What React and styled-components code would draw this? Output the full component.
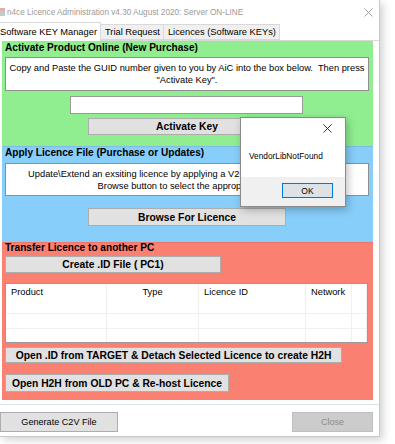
import styled, { createGlobalStyle } from 'styled-components';

const GlobalStyle = createGlobalStyle`
  html, body {
    margin: 0;
    padding: 0;
    background: #ffffff;
  }
  body {
    font-family: "Liberation Sans", Arial, sans-serif;
    font-size: 9.3px;
    color: #000;
  }
`;

const Screen = styled.div`
  position: relative;
  width: 395px;
  height: 444px;
  overflow: hidden;
  background: #ffffff;
`;

const Window = styled.div`
  width: 380px;
  height: 437px;
  background: #ffffff;
  border-right: 1px solid #c9c9c9;
  border-bottom: 1px solid #c9c9c9;
  box-shadow: 3px 3px 8px rgba(0, 0, 0, 0.18);
  display: flex;
  flex-direction: column;
  box-sizing: border-box;
`;

const TitleBar = styled.div`
  height: 22px;
  display: flex;
  align-items: center;
  padding-top: 2px;
  box-sizing: border-box;
`;

const AppIcon = styled.span`
  width: 5px;
  height: 8px;
  background: linear-gradient(#c77 0 40%, #9aa 40% 100%);
  opacity: 0.6;
`;

const TitleText = styled.span`
  margin-left: 2px;
  flex: 1;
  font-size: 8.2px;
  color: #9a9a9a;
  white-space: nowrap;
`;

const CloseX = styled.svg`
  width: 9px;
  height: 9px;
  margin-right: 6px;
`;

const TabStrip = styled.div`
  height: 19px;
  display: flex;
  align-items: flex-end;
  border-bottom: 1px solid #d9d9d9;
  box-sizing: border-box;
`;

const Tab = styled.div`
  height: ${(p) => (p.$active ? 19 : 16)}px;
  padding: 0 3px 0 ${(p) => (p.$first ? 0 : 4)}px;
  margin-left: ${(p) => (p.$first ? 0 : -1)}px;
  margin-bottom: ${(p) => (p.$active ? -1 : 0)}px;
  display: flex;
  align-items: center;
  background: ${(p) => (p.$active ? '#ffffff' : '#f0f0f0')};
  border: 1px solid #d9d9d9;
  border-bottom: ${(p) => (p.$active ? 'none' : '1px solid #d9d9d9')};
  border-left: ${(p) => (p.$first ? 'none' : '1px solid #d9d9d9')};
  box-sizing: border-box;
  font-size: 9.3px;
  white-space: nowrap;
  position: relative;
  z-index: ${(p) => (p.$active ? 1 : 0)};
`;

const TabPage = styled.div`
  height: 364px;
  padding: 0 6px 4px 2px;
  border-bottom: 1px solid #d9e3ea;
  display: flex;
  flex-direction: column;
  box-sizing: border-box;
`;

const Panel = styled.div`
  height: ${(p) => p.$h}px;
  flex-shrink: 0;
  background: ${(p) => p.$bg};
  border-top: 1px solid ${(p) => p.$edge};
  box-sizing: border-box;
  display: flex;
  flex-direction: column;
  padding: 0 4px 0 3px;
`;

const Heading = styled.div`
  font-weight: bold;
  font-size: 10.1px;
  line-height: ${(p) => p.$lh || 12}px;
  white-space: nowrap;
`;

const InfoBox = styled.div`
  height: ${(p) => p.$h}px;
  margin-top: ${(p) => p.$mt}px;
  background: #ffffff;
  border: 1px solid #8f8f8f;
  box-sizing: border-box;
  display: flex;
  flex-direction: column;
  justify-content: center;
  text-align: center;
  line-height: 12px;
  white-space: nowrap;
  overflow: hidden;
`;

const KeyInput = styled.input`
  width: 233px;
  height: 18px;
  margin: 5px 0 0 65px;
  border: 1px solid #9a9a9a;
  background: #fff;
  box-sizing: border-box;
  outline: none;
`;

const Button = styled.button`
  width: ${(p) => p.$w}px;
  height: ${(p) => p.$h || 17}px;
  margin-top: ${(p) => p.$mt || 0}px;
  margin-left: ${(p) => p.$ml || 0}px;
  padding: 0;
  background: #e1e1e1;
  border: 1px solid #adadad;
  box-sizing: border-box;
  font-family: "Liberation Sans", Arial, sans-serif;
  font-size: ${(p) => (p.$bold ? 10.3 : 9.1)}px;
  font-weight: ${(p) => (p.$bold ? 'bold' : 'normal')};
  color: #000;
  white-space: nowrap;
  flex-shrink: 0;
`;

const DisabledButton = styled(Button)`
  background: #cccccc;
  border-color: #bfbfbf;
  color: #8d8d8d;
`;

const Table = styled.div`
  width: 363px;
  height: 60px;
  margin-top: 10px;
  background: #fff;
  border: 1px solid #9a9a9a;
  box-sizing: border-box;
  display: grid;
  grid-template-columns: 101px 92px 107px 46px 1fr;
  grid-template-rows: 15px 15px 15px 1fr;
  flex-shrink: 0;
`;

const HeadCell = styled.div`
  padding-left: ${(p) => (p.$center ? 0 : 5)}px;
  text-align: ${(p) => (p.$center ? 'center' : 'left')};
  line-height: 15px;
  border-right: 1px solid #f0f0f0;
  padding-top: 1px;
  box-sizing: border-box;
`;

const Cell = styled.div`
  border-right: 1px solid #f0f0f0;
  border-bottom: ${(p) => (p.$line ? '1px solid #f0f0f0' : 'none')};
`;

const Footer = styled.div`
  display: flex;
  justify-content: space-between;
  padding: 7px 6px 0 0;
`;

const Dialog = styled.div`
  position: absolute;
  left: 240px;
  top: 117px;
  width: 106px;
  height: 90px;
  background: #ffffff;
  border: 1px solid #8a8a8a;
  box-shadow: 2px 3px 8px rgba(0, 0, 0, 0.25);
  box-sizing: border-box;
  display: flex;
  flex-direction: column;
`;

const DialogTop = styled.div`
  height: 20px;
  display: flex;
  justify-content: flex-end;
  align-items: center;
  padding-right: 7px;
`;

const DialogMessage = styled.div`
  height: 39px;
  padding: 13px 0 0 8px;
  box-sizing: border-box;
  font-size: 8.3px;
`;

const DialogFoot = styled.div`
  flex: 1;
  background: #f0f0f0;
  display: flex;
  justify-content: flex-end;
  padding: 6px 12px 0 0;
`;

const OkButton = styled.button`
  width: 51px;
  height: 15px;
  padding: 0;
  background: #e1e1e1;
  border: 1px solid #0078d7;
  box-shadow: inset 0 0 0 1px #cde4f7;
  font-family: "Liberation Sans", Arial, sans-serif;
  font-size: 8.5px;
  color: #000;
`;

const XMark = ({ size = 9, color = '#666' }) => (
  <CloseX viewBox="0 0 10 10" style={{ width: size, height: size }}>
    <path d="M0.5 0.5 L9.5 9.5 M9.5 0.5 L0.5 9.5" stroke={color} strokeWidth="1" fill="none" />
  </CloseX>
);

const columns = ['Product', 'Type', 'Licence ID', 'Network', ''];

const App = () => {
  return (
    <Screen>
      <GlobalStyle />
      <Window>
        <TitleBar>
          <AppIcon />
          <TitleText>n4ce Licence Administration v4.30 August 2020: Server ON-LINE</TitleText>
          <XMark size={9} color="#9a9a9a" />
        </TitleBar>
        <TabStrip>
          <Tab $active $first>Software KEY Manager</Tab>
          <Tab>Trial Request</Tab>
          <Tab>Licences (Software KEYs)</Tab>
        </TabStrip>
        <TabPage>
          <Panel $h={105} $bg="#90ee90" $edge="#90ee90">
            <Heading>Activate Product Online (New Purchase)</Heading>
            <InfoBox $h={34} $mt={3}>
              <span>Copy and Paste the GUID number given to you by AiC into the box below.&nbsp; Then press</span>
              <span>"Activate Key".</span>
            </InfoBox>
            <KeyInput />
            <Button $w={198} $mt={4} $ml={83} $bold>Activate Key</Button>
          </Panel>
          <Panel $h={96} $bg="#87cefa" $edge="#7dbde6">
            <Heading>Apply Licence File (Purchase or Updates)</Heading>
            <InfoBox $h={33} $mt={4}>
              <span>Update\Extend an exsiting licence by applying a V2C licence file. Click on the</span>
              <span>Browse button to select the appropriate file.</span>
            </InfoBox>
            <Button $w={198} $h={18} $mt={12} $ml={83} $bold>Browse For Licence</Button>
          </Panel>
          <Panel $h={158} $bg="#fa8072" $edge="#ee7568">
            <Heading $lh={9}>Transfer Licence to another PC</Heading>
            <Button $w={216} $mt={4} $bold>Create .ID File ( PC1)</Button>
            <Table>
              {columns.map((c, i) => (
                <HeadCell key={c + i} $center={c === 'Type'}>{c}</HeadCell>
              ))}
              {[0, 1, 2].map((r) =>
                columns.map((c, i) => <Cell key={`${r}-${i}`} $line={r < 2} />)
              )}
            </Table>
            <Button $w={337} $h={16} $mt={4} $bold>Open .ID from TARGET &amp; Detach Selected Licence to create H2H</Button>
            <Button $w={224} $h={18} $mt={11} $bold>Open H2H from OLD PC &amp; Re-host Licence</Button>
          </Panel>
        </TabPage>
        <Footer>
          <Button $w={118} $h={20}>Generate C2V File</Button>
          <DisabledButton $w={81} $h={20}>Close</DisabledButton>
        </Footer>
      </Window>
      <Dialog>
        <DialogTop>
          <XMark size={9} color="#222" />
        </DialogTop>
        <DialogMessage>VendorLibNotFound</DialogMessage>
        <DialogFoot>
          <OkButton>OK</OkButton>
        </DialogFoot>
      </Dialog>
    </Screen>
  );
};

export default App;
